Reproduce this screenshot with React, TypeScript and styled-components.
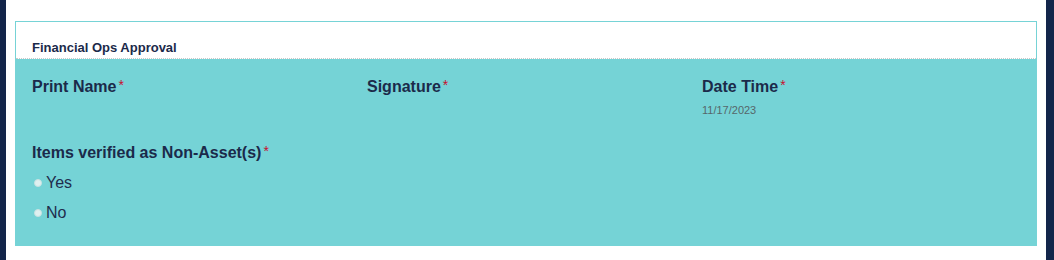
import styled, { createGlobalStyle } from 'styled-components'

const GlobalStyle = createGlobalStyle`
  html, body {
    margin: 0;
    padding: 0;
    background: #ffffff;
    font-family: "Liberation Sans", Arial, sans-serif;
  }
`

const Frame = styled.div`
  height: 260px;
  box-sizing: border-box;
  border-left: 6px solid #13254a;
  border-right: 8px solid #13254a;
  padding: 21px 9px 0;
  background: #ffffff;
`

const Card = styled.section`
  border: 1px solid #76d3d6;
  border-bottom: none;
`

const CardHeader = styled.div`
  height: 37px;
  box-sizing: border-box;
  display: flex;
  align-items: flex-end;
  padding: 0 16px 3px;
  border-bottom: 1px dotted #c9c9c9;
  font-size: 13px;
  line-height: 15px;
  font-weight: bold;
  color: #1b2a4a;
`

const Body = styled.div`
  background: #75d3d6;
  padding: 18px 0 18px 16px;
`

const Row = styled.div<{ $gap?: number }>`
  display: grid;
  grid-template-columns: repeat(3, 335px);
  margin-top: ${(p) => p.$gap ?? 0}px;
`

const Field = styled.div`
  display: flex;
  flex-direction: column;
`

const Label = styled.div`
  font-size: 16px;
  line-height: 20px;
  height: 20px;
  font-weight: bold;
  color: #1b2a4a;
`

const Required = styled.span`
  color: #c8102e;
  font-size: 14px;
  line-height: 0;
  font-weight: normal;
  margin-left: 2px;
  vertical-align: 2px;
`

const Value = styled.div`
  margin-top: 7px;
  font-size: 11px;
  line-height: 13px;
  color: #56676a;
`

const Options = styled.div`
  margin-top: 5px;
  display: flex;
  flex-direction: column;
`

const Option = styled.label`
  display: flex;
  align-items: center;
  gap: 4px;
  height: 30px;
  padding-left: 2px;
  font-size: 16px;
  color: #1f2d4d;
`

const Dot = styled.span`
  width: 8px;
  height: 8px;
  box-sizing: border-box;
  border-radius: 50%;
  background: #dff0f0;
  border: 1px solid #c8e2e2;
`

const fields = [
  { label: 'Print Name' },
  { label: 'Signature' },
  { label: 'Date Time', value: '11/17/2023' },
]

const App = () => {
  return (
    <>
      <GlobalStyle />
      <Frame>
        <Card>
          <CardHeader>Financial Ops Approval</CardHeader>
          <Body>
            <Row>
              {fields.map((f) => (
                <Field key={f.label}>
                  <Label>
                    {f.label}
                    <Required>*</Required>
                  </Label>
                  {f.value && <Value>{f.value}</Value>}
                </Field>
              ))}
            </Row>
            <Row $gap={26}>
              <Field>
                <Label>
                  Items verified as Non-Asset(s)
                  <Required>*</Required>
                </Label>
                <Options>
                  {['Yes', 'No'].map((o) => (
                    <Option key={o}>
                      <Dot />
                      {o}
                    </Option>
                  ))}
                </Options>
              </Field>
            </Row>
          </Body>
        </Card>
      </Frame>
    </>
  )
}

export default App
